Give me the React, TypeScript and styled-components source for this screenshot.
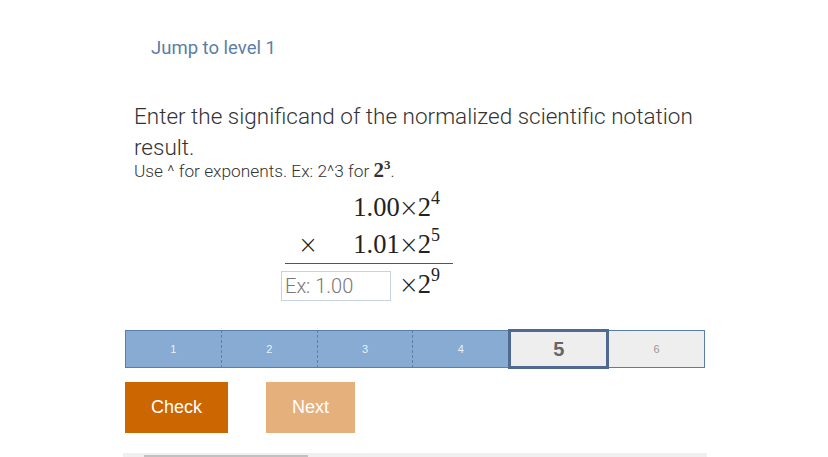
import React from "react";
import styled, { createGlobalStyle } from "styled-components";

const Global = createGlobalStyle`
  html, body { margin: 0; padding: 0; background: #fff; }
  body { font-family: Roboto, "Noto Sans", Arial, sans-serif; color: #333; overflow: hidden; }
`;

const Page = styled.div`
  width: 580px;
  margin-left: 125px;
  padding-top: 37px;
  position: relative;
  height: 457px;
  box-sizing: border-box;
`;

const JumpLink = styled.a`
  display: block;
  margin-left: 26px;
  font-size: 18.5px;
  line-height: 22px;
  color: #5a7ea8;
  text-decoration: none;
  font-weight: 400;
`;

const Prompt = styled.div`
  margin: 42px 0 0 9px;
`;

const Question = styled.div`
  font-size: 22.5px;
  font-weight: 300;
  line-height: 31px;
  color: #333;
`;

const Hint = styled.div`
  font-size: 17.3px;
  font-weight: 300;
  line-height: 20px;
  margin-top: -3px;
  color: #333;
`;

const MathInline = styled.span`
  font-family: "Liberation Serif", "DejaVu Serif", serif;
  font-size: 21px;
  font-weight: 700;
  sup { font-size: 13px; vertical-align: 8px; line-height: 0; }
`;

const MathBlock = styled.div`
  margin: 8px 0 0 160px;
  width: 168px;
  display: flex;
  flex-direction: column;
  font-family: "Liberation Serif", "DejaVu Serif", serif;
  font-size: 26.5px;
  color: #222;
`;

const MathRow = styled.div<{ $line?: boolean }>`
  display: flex;
  align-items: baseline;
  justify-content: space-between;
  height: 37px;
  line-height: 37px;
  padding: 0 13px 0 14px;
  border-bottom: ${(p) => (p.$line ? "1.5px solid #555" : "none")};
`;

const Term = styled.span`
  margin-left: auto;
  sup { font-size: 18px; vertical-align: 12px; line-height: 0; }
`;

const Times = styled.span`
  font-family: "DejaVu Sans", sans-serif;
  font-weight: 200;
  font-size: 24px;
  margin: 0 -1px;
`;

const AnswerRow = styled.div`
  display: flex;
  align-items: center;
  margin: 7px 0 0 -4px;
  padding-right: 13px;
`;

const AnswerInput = styled.input`
  width: 110px;
  height: 30px;
  box-sizing: border-box;
  border: 1px solid #c6d3dc;
  font-family: Roboto, sans-serif;
  font-weight: 300;
  font-size: 20px;
  padding: 0 3px;
  color: #333;
  outline: none;
  &::placeholder { color: #777; }
`;

const Suffix = styled.span`
  margin-left: auto;
  margin-top: -3px;
  sup { font-size: 18px; vertical-align: 12px; line-height: 0; }
`;

const Progress = styled.div`
  display: flex;
  margin-top: 29px;
  height: 38px;
`;

const Segment = styled.div<{ $state: "done" | "current" | "todo"; $dash?: boolean }>`
  flex: 1;
  box-sizing: border-box;
  display: flex;
  align-items: center;
  justify-content: center;
  font-family: "Liberation Sans", Arial, sans-serif;
  background: ${(p) => (p.$state === "done" ? "#87abd3" : "#eeeeee")};
  color: ${(p) => (p.$state === "done" ? "#e8f0f8" : p.$state === "current" ? "#666" : "#999")};
  font-size: ${(p) => (p.$state === "current" ? "20px" : "11px")};
  font-weight: ${(p) => (p.$state === "current" ? 700 : 400)};
  border-top: 1.5px solid #5a7fa8;
  border-bottom: 1.5px solid #5a7fa8;
  border-left: ${(p) => (p.$dash ? "1px dashed #5a7fa8" : "1.5px solid #5a7fa8")};
  &:last-child { border-right: 1.5px solid #5a7fa8; }
  ${(p) =>
    p.$state === "current"
      ? `border: 3px solid #4f6a90; margin: -1px 0; height: 40px;`
      : ""}
  ${(p) => (p.$state === "todo" ? "border-left: none;" : "")}
`;

const Buttons = styled.div`
  display: flex;
  gap: 38px;
  margin-top: 14px;
`;

const Button = styled.button<{ $disabled?: boolean }>`
  height: 51px;
  padding: 0 26px;
  border: none;
  background: ${(p) => (p.$disabled ? "#e6b07d" : "#cc6600")};
  color: #fff;
  font-family: "Liberation Sans", Arial, sans-serif;
  font-size: 18px;
  cursor: pointer;
`;

const ScrollTrack = styled.div`
  position: absolute;
  left: -2px;
  right: -2px;
  bottom: 0;
  height: 4px;
  background: #f0f0f0;
`;

const ScrollThumb = styled.div`
  position: absolute;
  left: 21px;
  top: 2px;
  width: 164px;
  height: 2px;
  background: #c1c1c1;
`;

export default function App() {
  const segs: Array<{ n: number; s: "done" | "current" | "todo" }> = [
    { n: 1, s: "done" },
    { n: 2, s: "done" },
    { n: 3, s: "done" },
    { n: 4, s: "done" },
    { n: 5, s: "current" },
    { n: 6, s: "todo" },
  ];
  return (
    <>
      <Global />
      <Page>
        <JumpLink href="#">Jump to level 1</JumpLink>
        <Prompt>
          <Question>Enter the significand of the normalized scientific notation result.</Question>
          <Hint>
            Use ^ for exponents. Ex: 2^3 for{" "}
            <MathInline>
              2<sup>3</sup>
            </MathInline>
            .
          </Hint>
        </Prompt>
        <MathBlock>
          <MathRow>
            <Term>
              1.00<Times>×</Times>2<sup>4</sup>
            </Term>
          </MathRow>
          <MathRow $line>
            <Times>×</Times>
            <Term>
              1.01<Times>×</Times>2<sup>5</sup>
            </Term>
          </MathRow>
          <AnswerRow>
            <AnswerInput placeholder="Ex: 1.00" />
            <Suffix>
              <Times>×</Times>2<sup>9</sup>
            </Suffix>
          </AnswerRow>
        </MathBlock>
        <Progress>
          {segs.map((g, i) => (
            <Segment key={g.n} $state={g.s} $dash={i > 0 && g.s === "done"}>
              {g.n}
            </Segment>
          ))}
        </Progress>
        <Buttons>
          <Button>Check</Button>
          <Button $disabled>Next</Button>
        </Buttons>
        <ScrollTrack>
          <ScrollThumb />
        </ScrollTrack>
      </Page>
    </>
  );
}
